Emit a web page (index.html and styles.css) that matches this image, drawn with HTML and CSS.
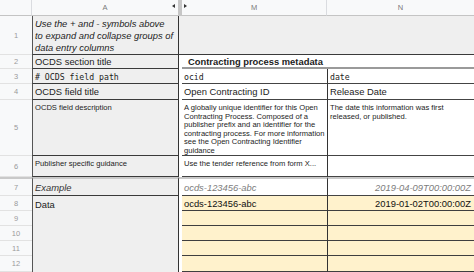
FILE: index.html
```html
<!DOCTYPE html>
<html>
<head>
<meta charset="utf-8">
<link rel="stylesheet" href="styles.css">
</head>
<body>
<div class="sheet">
  <div class="cell hd hd-rn"></div>
  <div class="cell hd hd-a">A<span class="tri-l"></span></div>
  <div class="cell hd hd-g"></div>
  <div class="cell hd hd-m"><span class="tri-r"></span>M</div>
  <div class="cell hd hd-n">N</div>

  <div class="cell rn">1</div>
  <div class="cell a intro">Use the + and - symbols above<br>to expand and collapse groups of<br>data entry columns</div>
  <div class="cell mn-top"></div>

  <div class="cell rn">2</div>
  <div class="cell a">OCDS section title</div>
  <div class="cell mn title">Contracting process metadata</div>

  <div class="cell rn">3</div>
  <div class="cell a mono">#&nbsp;OCDS field path</div>
  <div class="cell m body mono">ocid</div>
  <div class="cell n body mono">date</div>

  <div class="cell rn">4</div>
  <div class="cell a">OCDS field title</div>
  <div class="cell m body">Open Contracting ID</div>
  <div class="cell n body">Release Date</div>

  <div class="cell rn">5</div>
  <div class="cell a sm">OCDS field description</div>
  <div class="cell m body sm">A globally unique identifier for this Open<br>Contracting Process. Composed of a<br>publisher prefix and an identifier for the<br>contracting process. For more information<br>see the Open Contracting Identifier<br>guidance</div>
  <div class="cell n body sm">The date this information was first<br>released, or published.</div>

  <div class="cell rn">6</div>
  <div class="cell a sm">Publisher specific guidance</div>
  <div class="cell m body sm">Use the tender reference from form X...</div>
  <div class="cell n body sm"></div>

  <div class="cell rn fz">7</div>
  <div class="cell a fz it">Example</div>
  <div class="cell g fz"></div>
  <div class="cell m body fz ex">ocds-123456-abc</div>
  <div class="cell n body fz ex ra">2019-04-09T00:00:00Z</div>

  <div class="cell rn">8</div>
  <div class="cell a data">Data</div>
  <div class="cell m yl">ocds-123456-abc</div>
  <div class="cell n yl ra">2019-01-02T00:00:00Z</div>

  <div class="cell rn">9</div>
  <div class="cell m yl"></div>
  <div class="cell n yl"></div>

  <div class="cell rn">10</div>
  <div class="cell m yl"></div>
  <div class="cell n yl"></div>

  <div class="cell rn">11</div>
  <div class="cell m yl"></div>
  <div class="cell n yl"></div>

  <div class="cell rn">12</div>
  <div class="cell m yl"></div>
  <div class="cell n yl"></div>
</div>
</body>
</html>
```

FILE: styles.css
```css
body {
  margin: 0;
  background: #ffffff;
  font-family: "Liberation Sans", Arial, sans-serif;
  color: #1c1c1c;
}

.sheet {
  display: grid;
  grid-template-columns: 32px 147px 3px 145px 147px;
  grid-template-rows: 16px 39px 14px 15px 16px 56px 21px 19px 15px 15px 15px 15px 16px;
  width: 474px;
  height: 272px;
  overflow: hidden;
  font-size: 9.4px;
}

.cell {
  box-sizing: border-box;
  display: flex;
  align-items: center;
  white-space: nowrap;
  overflow: hidden;
  padding: 0 2px;
  min-width: 0;
}

/* column header row */
.hd {
  background: #f8f9fa;
  border-bottom: 1px solid #c4c4c4;
  color: #7a7a7a;
  font-size: 7.5px;
  justify-content: center;
  position: relative;
}
.hd-rn { grid-column: 1; border-right: 1px solid #dadce0; }
.hd-a { grid-column: 2; border-right: 1px solid #c6c6c6; }
.hd-g { grid-column: 3; background: #c6c6c6; border-bottom-color: #c6c6c6; padding: 0; }
.hd-m { grid-column: 4; border-right: 1px solid #dadce0; }
.hd-n { grid-column: 5; }

.tri-l {
  position: absolute;
  right: 3px;
  top: 4px;
  width: 0;
  height: 0;
  border-top: 2.5px solid transparent;
  border-bottom: 2.5px solid transparent;
  border-right: 3px solid #333333;
}
.tri-r {
  position: absolute;
  left: 2px;
  top: 4px;
  width: 0;
  height: 0;
  border-top: 2.5px solid transparent;
  border-bottom: 2.5px solid transparent;
  border-left: 3px solid #333333;
}

/* row numbers */
.rn {
  grid-column: 1;
  background: #f8f9fa;
  color: #9a9a9a;
  font-size: 7.5px;
  justify-content: center;
  border-bottom: 1px solid #e2e2e2;
}

/* column A */
.a {
  grid-column: 2;
  background: #efefef;
  border-left: 1px solid #555555;
  border-right: 1px solid #333333;
  border-bottom: 1px solid #3a3a3a;
}
.intro {
  font-style: italic;
  line-height: 12px;
  padding-top: 2px;
}
.data {
  grid-row: span 5;
  align-items: flex-start;
  padding-top: 3px;
  border-bottom: none;
}

.g { grid-column: 3; padding: 0; }

/* columns M and N */
.m { grid-column: 4; }
.n { grid-column: 5; border-left: 1px solid #333333; padding-left: 2px; }
.body { border-bottom: 1px solid #444444; }

.mn-top {
  grid-column: 3 / 6;
  background: #efefef;
  border-bottom: 1px solid #3a3a3a;
}
.title {
  grid-column: 4 / 6;
  font-weight: bold;
  padding-left: 6px;
  border-bottom: 2px solid #9a9a9a;
}

.mono {
  font-family: "DejaVu Sans Mono", "Liberation Mono", monospace;
  font-size: 8.2px;
  align-items: flex-end;
  padding-bottom: 1px;
}

.sm {
  font-size: 7.6px;
  line-height: 8.5px;
  align-items: flex-start;
  padding-top: 4px;
}

.fz { border-top: 2px solid #c9c9c9; }

.it { font-style: italic; color: #333333; }
.ex { font-style: italic; color: #7c7c7c; }
.ra { justify-content: flex-end; padding-right: 3px; }

.yl {
  background: #fff2cc;
  border-bottom: 1px solid #3f3f3f;
  color: #111111;
}
```
